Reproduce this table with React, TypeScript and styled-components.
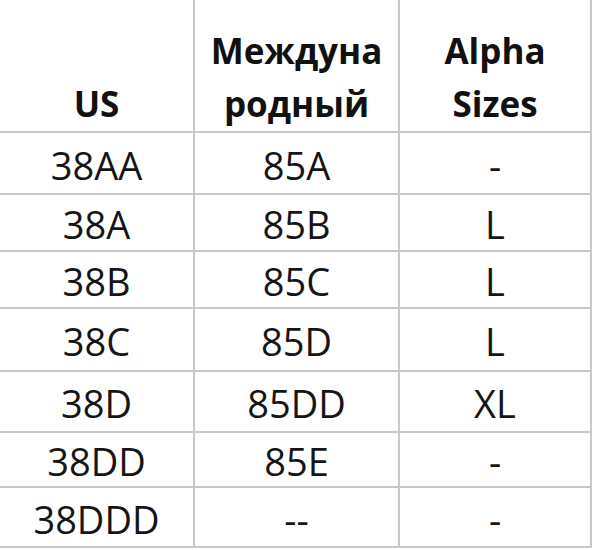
import React from "react";
import styled, { createGlobalStyle } from "styled-components";

const GlobalStyle = createGlobalStyle`
  html, body {
    margin: 0;
    padding: 0;
    background: #ffffff;
  }
  body {
    font-family: "Open Sans", "Liberation Sans", sans-serif;
    color: #111111;
  }
`;

const Table = styled.div`
  display: grid;
  grid-template-columns: 195px 205px 192px;
  width: 592px;
`;

const HeadCell = styled.div`
  box-sizing: border-box;
  height: 133px;
  display: flex;
  align-items: flex-end;
  justify-content: center;
  text-align: center;
  padding-bottom: 1px;
  border-right: 2px solid #c8c8c8;
  border-bottom: 2px solid #c8c8c8;
  font-size: 35px;
  font-weight: 700;
  line-height: 53px;
  color: #111111;
`;

const Cell = styled.div<{ $h: number }>`
  box-sizing: border-box;
  height: ${(p) => p.$h}px;
  display: flex;
  align-items: center;
  justify-content: center;
  padding-top: 3px;
  border-right: 2px solid #c8c8c8;
  border-bottom: 2px solid #c8c8c8;
  font-size: 38px;
  font-weight: 400;
  color: #151515;
`;

const rows = [
  { h: 62, us: "38AA", intl: "85A", alpha: "-" },
  { h: 57, us: "38A", intl: "85B", alpha: "L" },
  { h: 57, us: "38B", intl: "85C", alpha: "L" },
  { h: 63, us: "38C", intl: "85D", alpha: "L" },
  { h: 61, us: "38D", intl: "85DD", alpha: "XL" },
  { h: 55, us: "38DD", intl: "85E", alpha: "-" },
  { h: 60, us: "38DDD", intl: "--", alpha: "-" },
];

const App = (): JSX.Element => {
  return (
    <>
      <GlobalStyle />
      <Table>
        <HeadCell>US</HeadCell>
        <HeadCell>
          Междуна
          <br />
          родный
        </HeadCell>
        <HeadCell>
          Alpha
          <br />
          Sizes
        </HeadCell>
        {rows.map((row) => (
          <React.Fragment key={row.us}>
            <Cell $h={row.h}>{row.us}</Cell>
            <Cell $h={row.h}>{row.intl}</Cell>
            <Cell $h={row.h}>{row.alpha}</Cell>
          </React.Fragment>
        ))}
      </Table>
    </>
  );
};

export default App;
